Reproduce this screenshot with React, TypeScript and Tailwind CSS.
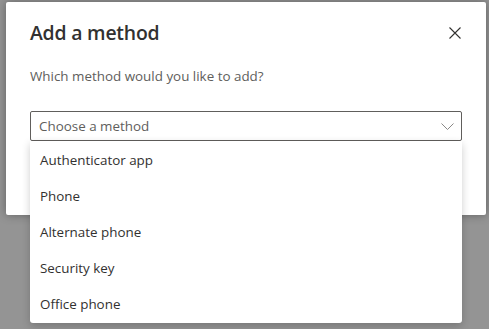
const options = ["Authenticator app", "Phone", "Alternate phone", "Security key", "Office phone"];

export default function App() {
  return (
    <div
      className="relative w-[489px] h-[329px] overflow-hidden bg-[#949494] pl-[6px] pt-[2px]"
      style={{ fontFamily: '"Open Sans", "Noto Sans", sans-serif' }}
    >
      <div className="relative w-[480px] h-[213px] bg-white rounded-[2px] shadow-[0_0_10px_rgba(0,0,0,0.35)] px-6 pt-[18px]">
        <div className="flex items-center justify-between h-[26px]">
          <h1 className="text-[19.4px] font-semibold text-[#323130] tracking-[-0.2px]">Add a method</h1>
          <svg width="12" height="12" viewBox="0 0 12 12" className="mr-[1px]">
            <path d="M0.5 0.5 L11.5 11.5 M11.5 0.5 L0.5 11.5" stroke="#323130" strokeWidth="1.1" />
          </svg>
        </div>
        <p className="mt-[21px] text-[13.4px] text-[#605e5c] leading-[18px]">Which method would you like to add?</p>

        <div className="relative mt-[26px]">
          <div className="h-[30px] border border-[#605e5c] rounded-[2px] flex items-center justify-between pl-[8px] pr-[7px]">
            <span className="text-[13.4px] text-[#605e5c]">Choose a method</span>
            <svg width="13" height="7" viewBox="0 0 13 7">
              <path d="M0.5 0.5 L6.5 6.5 L12.5 0.5" fill="none" stroke="#8a8886" strokeWidth="1" />
            </svg>
          </div>
          <ul className="absolute left-0 right-0 top-[30px] z-10 bg-white rounded-b-[3px] shadow-[0_3px_8px_rgba(0,0,0,0.2)] pt-[1px] pb-[1px]">
            {options.map((o) => (
              <li key={o} className="h-[36px] flex items-center px-[10px] text-[13.4px] text-[#323130]">
                {o}
              </li>
            ))}
          </ul>
        </div>
      </div>
    </div>
  );
}
